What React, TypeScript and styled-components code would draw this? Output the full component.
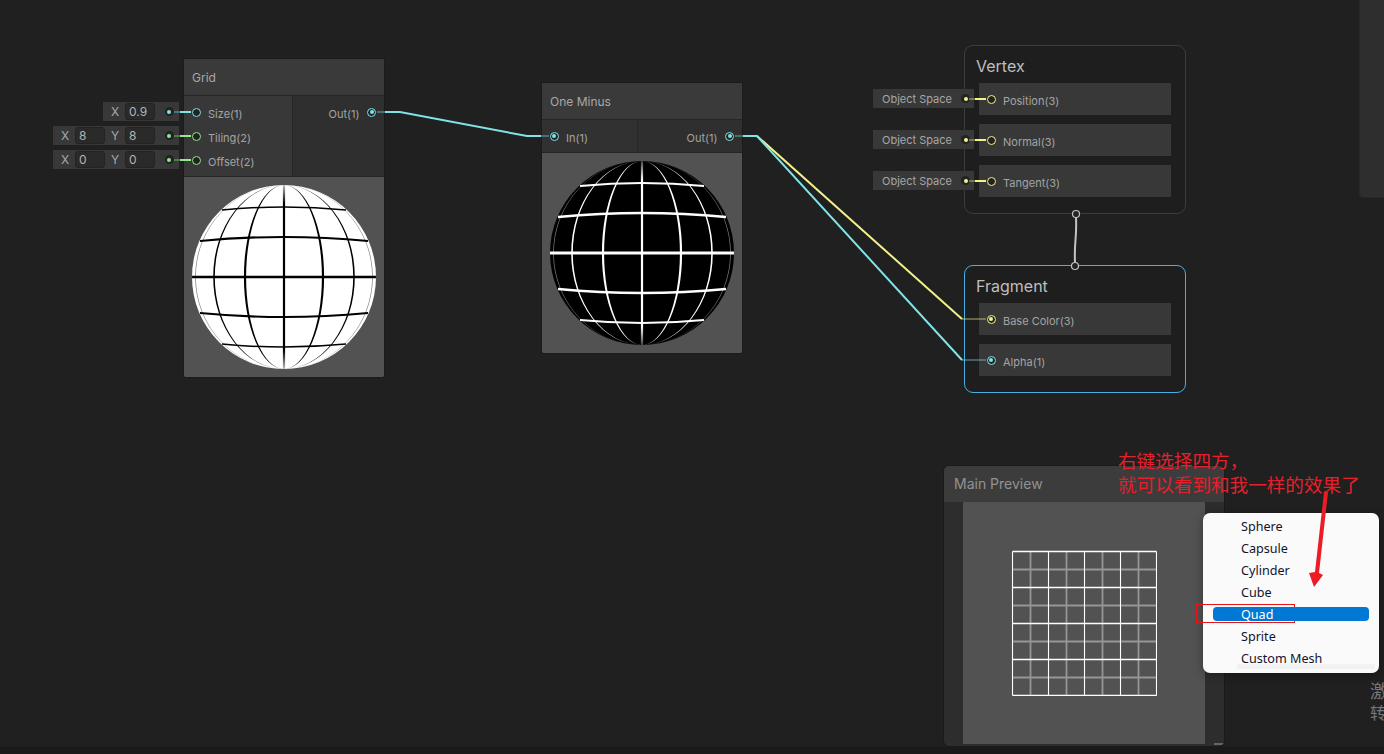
import React from "react";
import styled, { createGlobalStyle } from "styled-components";

const CYAN = "#7fe3e8";
const GREEN = "#93ea8e";
const YELLOW = "#f2f28a";

const Global = createGlobalStyle`
  html, body { margin: 0; padding: 0; background: #202020; overflow: hidden; }
  * { box-sizing: border-box; }
`;

const Page = styled.div`
  width: 1384px;
  height: 754px;
  display: flex;
  flex-direction: column;
  overflow: hidden;
  font-family: Inter, "Liberation Sans", sans-serif;
`;
const Graph = styled.main`
  position: relative;
  flex: 1;
  background: #202020;
  overflow: hidden;
`;
const StatusBar = styled.footer`
  height: 7px;
  background: #1a1a1a;
`;
const Node = styled.section<{ $x: number; $y: number }>`
  position: absolute;
  left: ${(p) => p.$x}px;
  top: ${(p) => p.$y}px;
  width: 200px;
  background: #383838;
  box-shadow: 0 0 0 1px #1b1b1b;
  border-radius: 2px;
`;
const NodeTitle = styled.header`
  height: 37px;
  padding-left: 8px;
  display: flex;
  align-items: center;
  background: #3a3a3a;
  border-bottom: 1px solid #262626;
  color: #a8a8a8;
  font-size: 12px;
`;
const Columns = styled.div<{ $split: number }>`
  display: grid;
  grid-template-columns: ${(p) => p.$split}px 1fr;
  padding: 0;
  border-bottom: 1px solid #262626;
`;
const InCol = styled.div<{ $bg: string }>`
  padding: 4px 0;
  background: ${(p) => p.$bg};
  border-right: 1px solid #262626;
`;
const OutCol = styled.div`
  padding: 4px 0;
  background: #2f2f2f;
`;
const PortRow = styled.div<{ $out?: boolean }>`
  position: relative;
  height: 24px;
  display: flex;
  align-items: center;
  gap: 7.5px;
  padding: 0 ${(p) => (p.$out ? "8px" : "7.5px")};
  justify-content: ${(p) => (p.$out ? "flex-end" : "flex-start")};
`;
const Ring = styled.span<{ $color: string; $filled?: boolean }>`
  flex: none;
  width: 9px;
  height: 9px;
  display: flex;
  align-items: center;
  justify-content: center;
  border-radius: 50%;
  border: 1.5px solid ${(p) => p.$color};
  background: #232323;
  &::after {
    content: "";
    display: ${(p) => (p.$filled ? "block" : "none")};
    width: 4px;
    height: 4px;
    border-radius: 50%;
    background: ${(p) => p.$color};
  }
`;
const PortLabel = styled.span`
  color: #a4a4a4;
  font-size: 11px;
  line-height: 13px;
  padding-top: 5px;
  white-space: nowrap;
`;
const Preview = styled.div`
  height: 200px;
  background: #525252;
  display: flex;
  align-items: center;
  justify-content: center;
  border-radius: 0 0 2px 2px;
`;
const Tag = styled.div`
  position: absolute;
  right: calc(100% + 5px);
  top: 2px;
  height: 19px;
  display: flex;
  align-items: center;
  justify-content: flex-end;
  padding: 0 5.5px 0 2px;
  background: #383838;
  color: #a8a8a8;
  font-size: 12px;
  white-space: nowrap;
`;
const Axis = styled.span`
  width: 20px;
  text-align: center;
  color: #a8a8a8;
`;
const Field = styled.span`
  width: 30px;
  height: 17px;
  padding-left: 3px;
  background: #2a2a2a;
  border: 1px solid #232323;
  border-radius: 3px;
  line-height: 15px;
  color: #b4b4b4;
`;
const TagDot = styled.span<{ $color: string }>`
  flex: none;
  width: 9px;
  height: 9px;
  margin-left: 9.5px;
  display: flex;
  align-items: center;
  justify-content: center;
  border-radius: 50%;
  background: #232323;
  &::after {
    content: "";
    width: 4px;
    height: 4px;
    border-radius: 50%;
    background: ${(p) => p.$color};
  }
`;
const SpaceTag = styled(Tag)`
  top: 6px;
  width: 101px;
  justify-content: space-between;
  padding: 0 5.5px 0 9px;
  font-size: 11px;
  color: #a6a6a6;
`;
const Block = styled.section<{ $y: number; $active?: boolean }>`
  position: absolute;
  left: 964px;
  top: ${(p) => p.$y}px;
  width: 222px;
  padding: 0 14px 16px;
  background: #1e1e1e;
  border: 1px solid ${(p) => (p.$active ? "#45b0e6" : "#3c3c3c")};
  border-radius: 9px;
`;
const BlockTitle = styled.h3`
  margin: 0;
  height: 37px;
  padding: 9px 0 0;
  margin-left: -3px;
  font-size: 16px;
  line-height: 22px;
  font-weight: 400;
  color: #bebebe;
`;
const BlockRows = styled.div`
  display: flex;
  flex-direction: column;
  gap: 9px;
`;
const BlockRow = styled.div`
  position: relative;
  height: 32px;
  display: flex;
  align-items: center;
  gap: 7.5px;
  padding: 0 7.5px;
  background: #383838;
`;
const WireLayer = styled.svg`
  position: absolute;
  left: 0;
  top: 0;
  pointer-events: none;
`;
const SidePanel = styled.aside`
  position: absolute;
  right: 0;
  top: 0;
  width: 25px;
  height: 198px;
  background: #2e2e2e;
  border-left: 1px solid #282828;
  border-bottom: 1px solid #282828;
  border-bottom-left-radius: 4px;
`;
const PreviewPanel = styled.section`
  position: absolute;
  left: 944px;
  top: 466px;
  width: 280px;
  height: 280px;
  background: #2d2d2d;
  box-shadow: 0 0 0 1px #1a1a1a;
  border-radius: 5px;
  overflow: hidden;
`;
const PanelTitle = styled.header`
  height: 36px;
  padding: 0 0 2px 10px;
  display: flex;
  align-items: center;
  background: #3c3c3c;
  color: #929292;
  font-size: 14px;
`;
const PanelBody = styled.div`
  position: relative;
  height: 244px;
  padding: 0 19px 2px;
  &::after {
    content: "";
    position: absolute;
    right: 0;
    bottom: 1px;
    width: 10px;
    height: 2px;
    background: #666;
  }
`;
const PanelView = styled.div`
  height: 242px;
  background: #525252;
  display: flex;
  align-items: center;
  justify-content: center;
`;
const Menu = styled.ul`
  position: absolute;
  left: 1203px;
  top: 513px;
  width: 176px;
  height: 160px;
  margin: 0;
  padding: 2px 10px;
  list-style: none;
  background: #fafafa;
  border-radius: 7px;
  box-shadow: 0 2px 10px rgba(0, 0, 0, 0.35);
  font-family: "Noto Sans", "Open Sans", sans-serif;
  font-size: 12.6px;
  overflow: hidden;
  &::after {
    content: "";
    position: absolute;
    left: 34px;
    right: 4px;
    bottom: 4px;
    height: 5px;
    background: #f2f2f2;
  }
`;
const MenuItem = styled.li`
  position: relative;
  z-index: 1;
  height: 22px;
  display: flex;
  align-items: center;
`;
const MenuLabel = styled.span<{ $selected?: boolean }>`
  flex: 1;
  height: 14px;
  line-height: 16px;
  padding-left: 28px;
  border-radius: 4px;
  background: ${(p) => (p.$selected ? "#0078d4" : "transparent")};
  color: ${(p) => (p.$selected ? "#fff" : "#14142a")};
`;
const Highlight = styled.div`
  position: absolute;
  left: 1196px;
  top: 604px;
  width: 99px;
  height: 19px;
  border: 1px solid #e8141c;
`;
const Note = styled.p`
  position: absolute;
  left: 1118px;
  top: 448px;
  margin: 0;
  font-family: "Noto Sans CJK SC", sans-serif;
  font-size: 18.6px;
  line-height: 24px;
  color: #e5202a;
  white-space: nowrap;
`;
const Clipped = styled.span<{ $y: number; $size: number }>`
  position: absolute;
  left: 1370px;
  top: ${(p) => p.$y}px;
  font-family: "Noto Sans CJK SC", sans-serif;
  font-size: ${(p) => p.$size}px;
  line-height: 22px;
  color: #777;
`;

const lens = (rx: number, w: number) => {
  const a = rx + w / 2;
  const b = rx - w / 2;
  return `M${-a} 0A${a} 92 0 1 1 ${a} 0A${a} 92 0 1 1 ${-a} 0ZM${-b} 0A${b} 92 0 1 1 ${b} 0A${b} 92 0 1 1 ${-b} 0Z`;
};

function Sphere({ inverted }: { inverted?: boolean }) {
  const id = inverted ? "inv" : "pos";
  const fill = inverted ? "#000" : "#fff";
  const line = inverted ? "#fff" : "#000";
  const boost = inverted ? 0.5 : 0;
  const horizontals: [string, number][] = [
    ["M-62-67Q0-73 62-67", 1.5],
    ["M-84-36Q0-44 84-36", 2.2],
    ["M-92 0L92 0", 2.4],
    ["M-84 36Q0 44 84 36", 2.2],
    ["M-62 67Q0 73 62 67", 1.5],
  ];
  const meridians: [number, number, number][] = [
    [39, 2.2, 1],
    [70, 1.6, 1],
    [88.5, 0.7, 0.5],
  ];
  return (
    <svg width="186" height="186" viewBox="-93 -93 186 186">
      <defs>
        <clipPath id={`${id}-clip`}>
          <circle r="92" />
        </clipPath>
        <linearGradient id={`${id}-fade`} x1="0" y1="-92" x2="0" y2="92" gradientUnits="userSpaceOnUse">
          <stop offset="0" stopColor={line} stopOpacity="0.25" />
          <stop offset="0.1" stopColor={line} stopOpacity="1" />
          <stop offset="0.9" stopColor={line} stopOpacity="1" />
          <stop offset="1" stopColor={line} stopOpacity="0.25" />
        </linearGradient>
      </defs>
      <circle r="92" fill={fill} />
      <g clipPath={`url(#${id}-clip)`}>
        <rect x="-1.1" y="-92" width="2.2" height="184" fill={`url(#${id}-fade)`} />
        {meridians.map(([rx, w, o]) => (
          <path key={rx} d={lens(rx, w)} fill={line} fillRule="evenodd" opacity={o} />
        ))}
        <g fill="none" stroke={line}>
          {horizontals.map(([d, w]) => (
            <path key={d} d={d} strokeWidth={w + boost} />
          ))}
        </g>
      </g>
    </svg>
  );
}

function QuadGrid() {
  const major = [0, 36, 72, 108, 144];
  const minor = [18, 54, 90, 126];
  return (
    <svg width="146" height="146" viewBox="-1.5 -1.5 146 146">
      <g stroke="#969696" strokeWidth="1.8">
        {minor.map((v) => (
          <React.Fragment key={v}>
            <line x1={v} y1="0" x2={v} y2="144" />
            <line x1="0" y1={v} x2="144" y2={v} />
          </React.Fragment>
        ))}
      </g>
      <g stroke="#fff">
        {major.map((v) => (
          <React.Fragment key={v}>
            <line x1={v} y1="0" x2={v} y2="144" strokeWidth="1.1" />
            <line x1="0" y1={v} x2="144" y2={v} strokeWidth="1.3" />
          </React.Fragment>
        ))}
      </g>
    </svg>
  );
}

type Wire = { d: string; color: string; w?: number; dim?: boolean };
const wires: Wire[] = [
  { d: "M174 112H191", color: CYAN, dim: true },
  { d: "M180 112H191", color: CYAN },
  { d: "M174 136H191", color: GREEN, dim: true },
  { d: "M180 136H191", color: GREEN },
  { d: "M174 160H191", color: GREEN, dim: true },
  { d: "M180 160H191", color: GREEN },
  { d: "M377 112H385", color: CYAN, dim: true },
  { d: "M385 112H400L527 136H541", color: CYAN },
  { d: "M541 136H549", color: CYAN, dim: true },
  { d: "M735 136H743", color: CYAN, dim: true },
  { d: "M757 136L962 319", color: YELLOW },
  { d: "M743 136H757L962 360", color: CYAN },
  { d: "M962 319H986", color: YELLOW, dim: true },
  { d: "M962 360H986", color: CYAN, dim: true },
  { d: "M969 99H986", color: YELLOW, dim: true },
  { d: "M975 99H986", color: YELLOW },
  { d: "M969 140H986", color: YELLOW, dim: true },
  { d: "M975 140H986", color: YELLOW },
  { d: "M969 181H986", color: YELLOW, dim: true },
  { d: "M975 181H986", color: YELLOW },
  { d: "M1076 218C1077 238 1074 242 1075 262", color: "#c4c4c4" },
];

const Xy = ({ x, y, color }: { x: string; y: string; color: string }) => (
  <Tag>
    <Axis>X</Axis>
    <Field>{x}</Field>
    <Axis>Y</Axis>
    <Field>{y}</Field>
    <TagDot $color={color} />
  </Tag>
);

const vertexRows = ["Position(3)", "Normal(3)", "Tangent(3)"];
const meshes = ["Sphere", "Capsule", "Cylinder", "Cube", "Quad", "Sprite", "Custom Mesh"];

export default function App() {
  return (
    <Page>
      <Global />
      <Graph>
        <Node $x={184} $y={59}>
          <NodeTitle>Grid</NodeTitle>
          <Columns $split={109}>
            <InCol $bg="#383838">
              <PortRow>
                <Tag>
                  <Axis>X</Axis>
                  <Field>0.9</Field>
                  <TagDot $color={CYAN} />
                </Tag>
                <Ring $color={CYAN} />
                <PortLabel>Size(1)</PortLabel>
              </PortRow>
              <PortRow>
                <Xy x="8" y="8" color={GREEN} />
                <Ring $color={GREEN} />
                <PortLabel>Tiling(2)</PortLabel>
              </PortRow>
              <PortRow>
                <Xy x="0" y="0" color={GREEN} />
                <Ring $color={GREEN} />
                <PortLabel>Offset(2)</PortLabel>
              </PortRow>
            </InCol>
            <OutCol>
              <PortRow $out>
                <PortLabel>Out(1)</PortLabel>
                <Ring $color={CYAN} $filled />
              </PortRow>
            </OutCol>
          </Columns>
          <Preview>
            <Sphere />
          </Preview>
        </Node>

        <Node $x={542} $y={83}>
          <NodeTitle>One Minus</NodeTitle>
          <Columns $split={96}>
            <InCol $bg="#313131">
              <PortRow>
                <Ring $color={CYAN} $filled />
                <PortLabel>In(1)</PortLabel>
              </PortRow>
            </InCol>
            <OutCol>
              <PortRow $out>
                <PortLabel>Out(1)</PortLabel>
                <Ring $color={CYAN} $filled />
              </PortRow>
            </OutCol>
          </Columns>
          <Preview>
            <Sphere inverted />
          </Preview>
        </Node>

        <Block $y={45}>
          <BlockTitle>Vertex</BlockTitle>
          <BlockRows>
            {vertexRows.map((r) => (
              <BlockRow key={r}>
                <SpaceTag>
                  Object Space
                  <TagDot $color={YELLOW} />
                </SpaceTag>
                <Ring $color={YELLOW} />
                <PortLabel>{r}</PortLabel>
              </BlockRow>
            ))}
          </BlockRows>
        </Block>

        <Block $y={265} $active>
          <BlockTitle>Fragment</BlockTitle>
          <BlockRows>
            <BlockRow>
              <Ring $color={YELLOW} $filled />
              <PortLabel>Base Color(3)</PortLabel>
            </BlockRow>
            <BlockRow>
              <Ring $color={CYAN} $filled />
              <PortLabel>Alpha(1)</PortLabel>
            </BlockRow>
          </BlockRows>
        </Block>

        <WireLayer width="1384" height="754" fill="none" viewBox="0 0 1384 754">
          {wires.map((wire, i) => (
            <path
              key={i}
              d={wire.d}
              stroke={wire.color}
              strokeWidth={wire.w ?? 2}
              strokeOpacity={wire.dim ? 0.35 : 1}
            />
          ))}
          <circle cx="1076" cy="214" r="3.5" stroke="#c4c4c4" strokeWidth="1.2" fill="#232323" />
          <circle cx="1075" cy="266" r="3.5" stroke="#c4c4c4" strokeWidth="1.2" fill="#232323" />
        </WireLayer>

        <SidePanel />

        <PreviewPanel>
          <PanelTitle>Main Preview</PanelTitle>
          <PanelBody>
            <PanelView>
              <QuadGrid />
            </PanelView>
          </PanelBody>
        </PreviewPanel>

        <Clipped $y={679} $size={18}>激</Clipped>
        <Clipped $y={701} $size={16}>转</Clipped>

        <Menu>
          {meshes.map((m) => (
            <MenuItem key={m}>
              <MenuLabel $selected={m === "Quad"}>{m}</MenuLabel>
            </MenuItem>
          ))}
        </Menu>

        <Highlight />
        <Note>
          右键选择四方，
          <br />
          就可以看到和我一样的效果了
        </Note>
        <WireLayer width="1384" height="754" viewBox="0 0 1384 754">
          <path d="M1324 492L1328 492L1319 573L1323 575L1314 587L1309 573L1315 572Z" fill="#ed1c24" />
        </WireLayer>
      </Graph>
      <StatusBar />
    </Page>
  );
}
